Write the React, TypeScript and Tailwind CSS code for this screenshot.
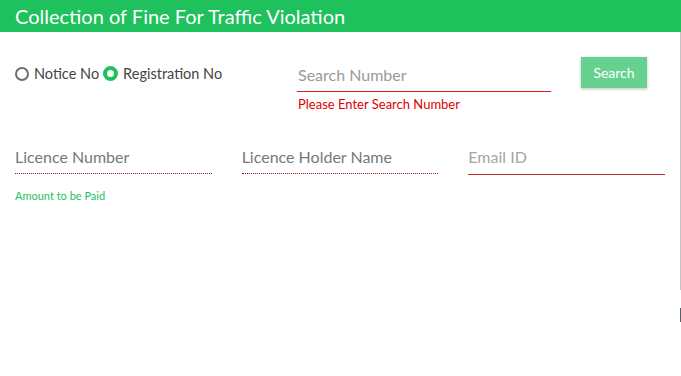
import { useState } from 'react';

function Radio({ checked, label, onClick }: { checked: boolean; label: string; onClick: () => void }) {
  return (
    <label className="flex items-center gap-[5px] cursor-pointer" onClick={onClick}>
      <span
        className={
          checked
            ? 'w-[15px] h-[15px] rounded-full border-[4px] border-[#1ec15c] bg-white'
            : 'w-[14px] h-[14px] rounded-full border-2 border-[#6b6e73] bg-white'
        }
      />
      <span className="text-[14.5px] text-[#444]">{label}</span>
    </label>
  );
}

export default function App() {
  const [mode, setMode] = useState<'notice' | 'reg'>('reg');

  return (
    <div className="w-[681px] h-[376px] bg-white relative" style={{ fontFamily: 'Lato, "Open Sans", sans-serif' }}>
      <div className="h-[32px] bg-[#1ec15c] flex items-center px-[15px]">
        <h1 className="text-[20px] text-white leading-none">Collection of Fine For Traffic Violation</h1>
      </div>

      <div className="w-[681px] h-[258px] border-r border-[#c4c4c4] px-[15px]">
        <div className="flex items-start pt-[25px]">
          <div className="w-[282px] flex items-center gap-[4px] pt-[6px]">
            <Radio checked={mode === 'notice'} label="Notice No" onClick={() => setMode('notice')} />
            <Radio checked={mode === 'reg'} label="Registration No" onClick={() => setMode('reg')} />
          </div>
          <div className="w-[254px] flex flex-col">
            <input
              placeholder="Search Number"
              className="h-[35px] pt-[1px] pl-[1px] text-[16px] text-[#333] placeholder:text-[#9a9a9a] border-b border-[#e01a1a] outline-none bg-transparent"
            />
            <span className="text-[13px] text-[#e00000] mt-[3px] pl-[1px]">Please Enter Search Number</span>
          </div>
          <button className="ml-[30px] w-[66px] h-[31px] bg-[#67d28f] text-white text-[14px] shadow-[0_1px_3px_rgba(0,0,0,0.25)]">
            Search
          </button>
        </div>

        <div className="grid grid-cols-3 gap-[30px] mt-[30px]">
          <div className="h-[29px] pb-[4px] border-b border-dotted border-[#b0102a] flex items-center">
            <span className="text-[16px] text-[#77787c]">Licence Number</span>
          </div>
          <div className="h-[29px] pb-[4px] border-b border-dotted border-[#b0102a] flex items-center">
            <span className="text-[16px] text-[#77787c]">Licence Holder Name</span>
          </div>
          <input
            placeholder="Email ID"
            className="h-[30px] pb-[5px] text-[16px] placeholder:text-[#a5a5a5] border-b border-[#c42a30] outline-none bg-transparent"
          />
        </div>

        <div className="text-[11px] text-[#1ec15c] mt-[13px]">Amount to be Paid</div>
      </div>
      <div className="absolute left-[680px] top-[308px] w-[1px] h-[14px] bg-[#5b6068]" />
    </div>
  );
}
